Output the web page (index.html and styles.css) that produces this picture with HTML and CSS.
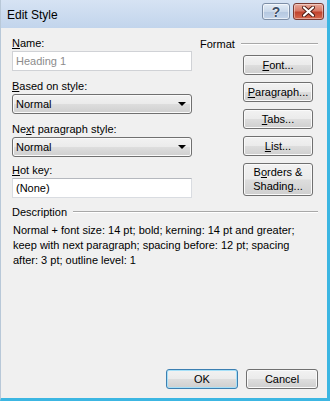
FILE: index.html
```html
<!DOCTYPE html>
<html>
<head>
<meta charset="utf-8">
<link rel="stylesheet" href="styles.css">
</head>
<body>
<div class="window">
  <div class="titlebar">
    <span class="title">Edit Style</span>
    <div class="ctrls">
      <div class="cbtn help"><span>?</span></div>
      <div class="cbtn close">
        <svg width="13" height="11" viewBox="0 0 13 11"><path d="M2 1.5 L11 9.5 M11 1.5 L2 9.5" stroke="#4a1a12" stroke-width="4" stroke-linecap="round"/><path d="M2 1.5 L11 9.5 M11 1.5 L2 9.5" stroke="#fff" stroke-width="2.2" stroke-linecap="round"/></svg>
      </div>
    </div>
  </div>
  <div class="content">
    <div class="top">
      <div class="fields">
        <div class="lbl"><u>N</u>ame:</div>
        <div class="input dim">Heading 1</div>
        <div class="lbl gap8"><u>B</u>ased on style:</div>
        <div class="select">Normal<span class="arrow"></span></div>
        <div class="lbl gap8">Ne<u>x</u>t paragraph style:</div>
        <div class="select">Normal<span class="arrow"></span></div>
        <div class="lbl gap6"><u>H</u>ot key:</div>
        <div class="input">(None)</div>
      </div>
      <div class="format">
        <div class="ghead">Format<span class="gline"></span></div>
        <div class="fbtns">
          <div class="btn"><u>F</u>ont...</div>
          <div class="btn"><u>P</u>aragraph...</div>
          <div class="btn"><u>T</u>abs...</div>
          <div class="btn"><u>L</u>ist...</div>
          <div class="btn tall">B<u>o</u>rders &amp;<br>Shading...</div>
        </div>
      </div>
    </div>
    <div class="desc">
      <div class="ghead">Description<span class="gline"></span></div>
      <p class="desctext">Normal + font size: 14 pt; bold; kerning: 14 pt and greater;<br>keep with next paragraph; spacing before: 12 pt; spacing<br>after: 3 pt; outline level: 1</p>
    </div>
    <div class="footer">
      <div class="btn wide ok">OK</div>
      <div class="btn wide">Cancel</div>
    </div>
  </div>
</div>
</body>
</html>
```
FILE: styles.css
```css
html, body {
  margin: 0;
  padding: 0;
}
body {
  width: 330px;
  height: 401px;
  overflow: hidden;
  font-family: "Liberation Sans", Arial, sans-serif;
  font-size: 11px;
  color: #000;
  background: #f0f0f0;
}
.window {
  box-sizing: border-box;
  width: 330px;
  height: 401px;
  display: flex;
  flex-direction: column;
  background: #f0f0f0;
  border-left: 1px solid #b8c8d8;
  border-right: 3px solid #3cb6e2;
  border-bottom: 3px solid #3cb6e2;
}
.titlebar {
  height: 28px;
  flex: none;
  display: flex;
  align-items: center;
  padding-left: 6px;
  background: linear-gradient(#d6e3f3, #c2d5ec);
}
.title {
  font-size: 12px;
  color: #000;
  margin-top: 1px;
}
.ctrls {
  margin-left: auto;
  align-self: flex-start;
  margin-top: 3px;
  margin-right: 3px;
  display: flex;
  gap: 3px;
}
.cbtn {
  box-sizing: border-box;
  height: 17px;
  border-radius: 3px;
  display: flex;
  align-items: center;
  justify-content: center;
}
.help {
  width: 28px;
  border: 1px solid #7d8ea6;
  background: linear-gradient(#e3ecf6 0%, #c9d8ea 50%, #b4c7df 51%, #c4d5ea 100%);
  box-shadow: inset 0 0 0 1px rgba(255,255,255,0.6);
}
.help span {
  font-size: 14px;
  font-weight: bold;
  color: #3e4e66;
  text-shadow: 0 0 2px #fff, 0 0 1px #fff;
  line-height: 14px;
}
.close {
  width: 31px;
  border: 1px solid #7a3a32;
  background: linear-gradient(#e8a899 0%, #d87a68 45%, #c1432e 55%, #d6684e 100%);
  box-shadow: inset 0 0 0 1px rgba(255,255,255,0.4);
}
.content {
  flex: 1;
  display: flex;
  flex-direction: column;
  padding: 8px 9px 9px 11px;
}
.top {
  display: grid;
  grid-template-columns: 180px 1fr;
  column-gap: 8px;
}
.fields {
  display: flex;
  flex-direction: column;
}
.lbl {
  height: 15px;
  line-height: 14px;
}
.gap8 { margin-top: 8px; }
.gap6 { margin-top: 6px; }
.input {
  box-sizing: border-box;
  height: 20px;
  background: #fff;
  border: 1px solid #d9dce1;
  border-top-color: #b5b8be;
  padding-left: 3px;
  line-height: 18px;
}
.input.dim {
  color: #8c8c8c;
  border-color: #d0d2d6;
}
.select, .btn {
  box-sizing: border-box;
  height: 20px;
  border: 1px solid #707070;
  border-radius: 3px;
  background: linear-gradient(#f2f2f2 0%, #ebebeb 48%, #dddddd 52%, #cfcfcf 100%);
  box-shadow: inset 0 0 0 1px #fafafa;
  line-height: 18px;
}
.select {
  position: relative;
  padding-left: 3px;
}
.arrow {
  position: absolute;
  right: 5px;
  top: 7px;
  width: 0;
  height: 0;
  border-left: 4px solid transparent;
  border-right: 4px solid transparent;
  border-top: 4px solid #000;
}
.format {
  display: flex;
  flex-direction: column;
}
.ghead {
  display: flex;
  align-items: center;
  height: 15px;
  line-height: 14px;
}
.gline {
  flex: 1;
  height: 0;
  border-top: 1px solid #a8a8a8;
  border-bottom: 1px solid #fff;
  margin-left: 6px;
  margin-top: 1px;
}
.fbtns {
  margin-top: 4px;
  margin-left: 43px;
  width: 70px;
  display: flex;
  flex-direction: column;
  gap: 7px;
}
.btn {
  text-align: center;
}
.btn.tall {
  height: 33px;
  line-height: 14px;
  padding-top: 1px;
}
.desc {
  margin-top: 6px;
}
.desctext {
  margin: 4px 0 0 1px;
  line-height: 15px;
}
.footer {
  margin-top: auto;
  display: flex;
  justify-content: flex-end;
  gap: 8px;
}
.btn.wide {
  width: 72px;
}
.btn.ok {
  border-color: #3c7fb1;
  box-shadow: inset 0 0 0 1px #a6e0f8;
}
```
